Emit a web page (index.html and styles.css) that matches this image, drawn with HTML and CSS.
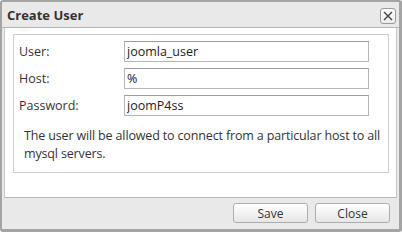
FILE: index.html
```html
<!DOCTYPE html>
<html lang="en">
<head>
    <meta charset="UTF-8">
    <title>Create User</title>
    <link rel="stylesheet" href="styles.css">
</head>
<body>
    <div class="dialog">
        <div class="titlebar">
            <span class="title">Create User</span>
            <button class="close-x" title="Close">
                <svg width="10" height="10" viewBox="0 0 10 10"><path d="M1 1 L9 9 M9 1 L1 9" stroke="#444" stroke-width="1.4" fill="none"/></svg>
            </button>
        </div>
        <div class="content">
            <div class="box">
                <div class="row">
                    <label for="user">User:</label>
                    <input type="text" id="user" value="joomla_user">
                </div>
                <div class="row">
                    <label for="host">Host:</label>
                    <input type="text" id="host" value="%">
                </div>
                <div class="row">
                    <label for="pass">Password:</label>
                    <input type="text" id="pass" value="joomP4ss">
                </div>
                <p class="note">The user will be allowed to connect from a particular host to all mysql servers.</p>
            </div>
        </div>
        <div class="footer">
            <button class="btn">Save</button>
            <button class="btn">Close</button>
        </div>
    </div>
</body>
</html>
```

FILE: styles.css
```css
* {
    margin: 0;
    padding: 0;
    box-sizing: border-box;
    font-family: "Open Sans", "Liberation Sans", sans-serif;
}
body {
    width: 402px;
    height: 232px;
    background: #fff;
}
.dialog {
    width: 402px;
    height: 232px;
    background: #e9e9e9;
    border: 2px solid #a4a4a4;
    border-right-width: 3px;
    border-bottom-width: 3px;
    border-radius: 3px;
    display: flex;
    flex-direction: column;
}
.titlebar {
    height: 26px;
    display: flex;
    align-items: center;
    justify-content: space-between;
    padding: 0 3px 0 5px;
    border-bottom: 1px solid #b4b4b4;
}
.title {
    font-size: 13px;
    font-weight: bold;
    color: #333;
}
.close-x {
    width: 16px;
    height: 16px;
    border: 1px solid #9a9a9a;
    border-radius: 3px;
    background: linear-gradient(#ffffff, #ececec);
    display: flex;
    align-items: center;
    justify-content: center;
    margin-top: 2px;
}
.content {
    background: #fff;
    margin: 0 2px 0 2px;
    padding: 6px 7px 24px 8px;
    border-left: 1px solid #c8c8c8;
    border-right: 1px solid #c8c8c8;
    border-bottom: 1px solid #b8b8b8;
}
.box {
    border: 1px solid #cfcfcf;
    padding: 6px 4px 8px 5px;
    height: 139px;
}
.row {
    display: flex;
    align-items: center;
    margin-bottom: 6px;
}
.row label {
    width: 105px;
    font-size: 12.5px;
    color: #333;
}
.row input {
    width: 245px;
    height: 21px;
    border: 1px solid #b6b6b6;
    border-top-color: #9c9c9c;
    padding: 0 2px;
    font-size: 12.5px;
    color: #222;
    outline: none;
}
.note {
    margin: 11px 0 0 5px;
    font-size: 12.5px;
    letter-spacing: -0.15px;
    line-height: 18px;
    color: #333;
}
.footer {
    flex: 1;
    display: flex;
    justify-content: flex-end;
    align-items: flex-start;
    gap: 7px;
    padding: 5px 9px 0 0;
}
.btn {
    width: 75px;
    height: 20px;
    border: 1px solid #adadad;
    border-radius: 3px;
    background: linear-gradient(#ffffff, #e6e6e6);
    font-size: 12px;
    color: #333;
}
```
